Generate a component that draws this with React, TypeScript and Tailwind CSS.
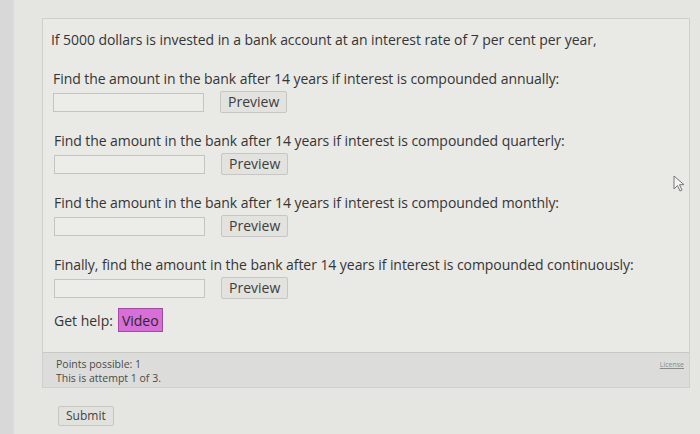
import React from 'react';

const questions = [
  'Find the amount in the bank after 14 years if interest is compounded annually:',
  'Find the amount in the bank after 14 years if interest is compounded quarterly:',
  'Find the amount in the bank after 14 years if interest is compounded monthly:',
  'Finally, find the amount in the bank after 14 years if interest is compounded continuously:',
];

function AnswerRow() {
  return (
    <div className="flex items-center mt-[2px] h-[22px]">
      <div className="w-[151px] h-[19px] border border-[#c4c4c2] bg-[#ecece9]" />
      <button className="ml-[16px] h-[22px] px-[7px] border border-[#c6c6c3] rounded-[2px] bg-[#e2e2df] text-[#3d3d3d] text-[14px] leading-none">
        Preview
      </button>
    </div>
  );
}

export default function App() {
  return (
    <div
      className="relative w-[700px] h-[434px] overflow-hidden flex bg-[#e5e5e2] text-[#353535]"
      style={{ fontFamily: '"Open Sans", "Noto Sans", sans-serif' }}
    >
      {/* left page strip */}
      <div className="w-[14px] h-full bg-[#d9d8d9] border-r border-[#dcdcda]" />

      <div className="flex-1 flex flex-col pl-[28px] pt-[18px]">
        {/* question panel */}
        <div className="w-[648px] border border-[#cfcfcc] bg-[#e9e9e6] flex flex-col">
          <div className="px-[8px] pt-[11px]">
            <p className="text-[14px] leading-[20px] tracking-[-0.06px]">
              If 5000 dollars is invested in a bank account at an interest rate of 7 per cent per year,
            </p>

            {questions.map((q, i) => (
              <div key={i} className={i === 0 ? 'mt-[19px] pl-[2px]' : 'mt-[18px] pl-[3px]'}>
                <p className="text-[14px] leading-[20px] tracking-[-0.06px]">{q}</p>
                <AnswerRow />
              </div>
            ))}

            <div className="mt-[9px] pl-[3px] flex items-center h-[24px] mb-[20px]">
              <span className="text-[14px]">Get help:</span>
              <span className="ml-[5px] px-[3px] h-[24px] flex items-center bg-[#d86ed8] border border-[#a24aa2] text-[14px] text-[#2a2a2a]">
                Video
              </span>
            </div>
          </div>

          {/* footer info box */}
          <div className="h-[35px] border-t border-[#c8c8c5] bg-[#dcdddb] flex justify-between pl-[13px] pr-[5px] pt-[4px]">
            <div className="text-[10.5px] leading-[14px] text-[#4a4a4a]">
              <div>Points possible: 1</div>
              <div>This is attempt 1 of 3.</div>
            </div>
            <a className="text-[7px] leading-[16px] text-[#8a8a8a] underline">License</a>
          </div>
        </div>

        <div className="mt-[14px] pl-[16px]">
          <button className="h-[20px] px-[7px] border border-[#c6c6c3] rounded-[2px] bg-[#e1e1de] text-[12px] leading-none text-[#444]">
            Submit
          </button>
        </div>
      </div>

      {/* mouse cursor */}
      <svg className="absolute left-[673px] top-[175px]" width="14" height="18" viewBox="0 0 14 18">
        <path d="M1 1 L1 14 L4.5 10.5 L7 16 L9 15 L6.5 9.7 L11 9.7 Z" fill="#f4f4f2" stroke="#777" strokeWidth="1" />
      </svg>
    </div>
  );
}
